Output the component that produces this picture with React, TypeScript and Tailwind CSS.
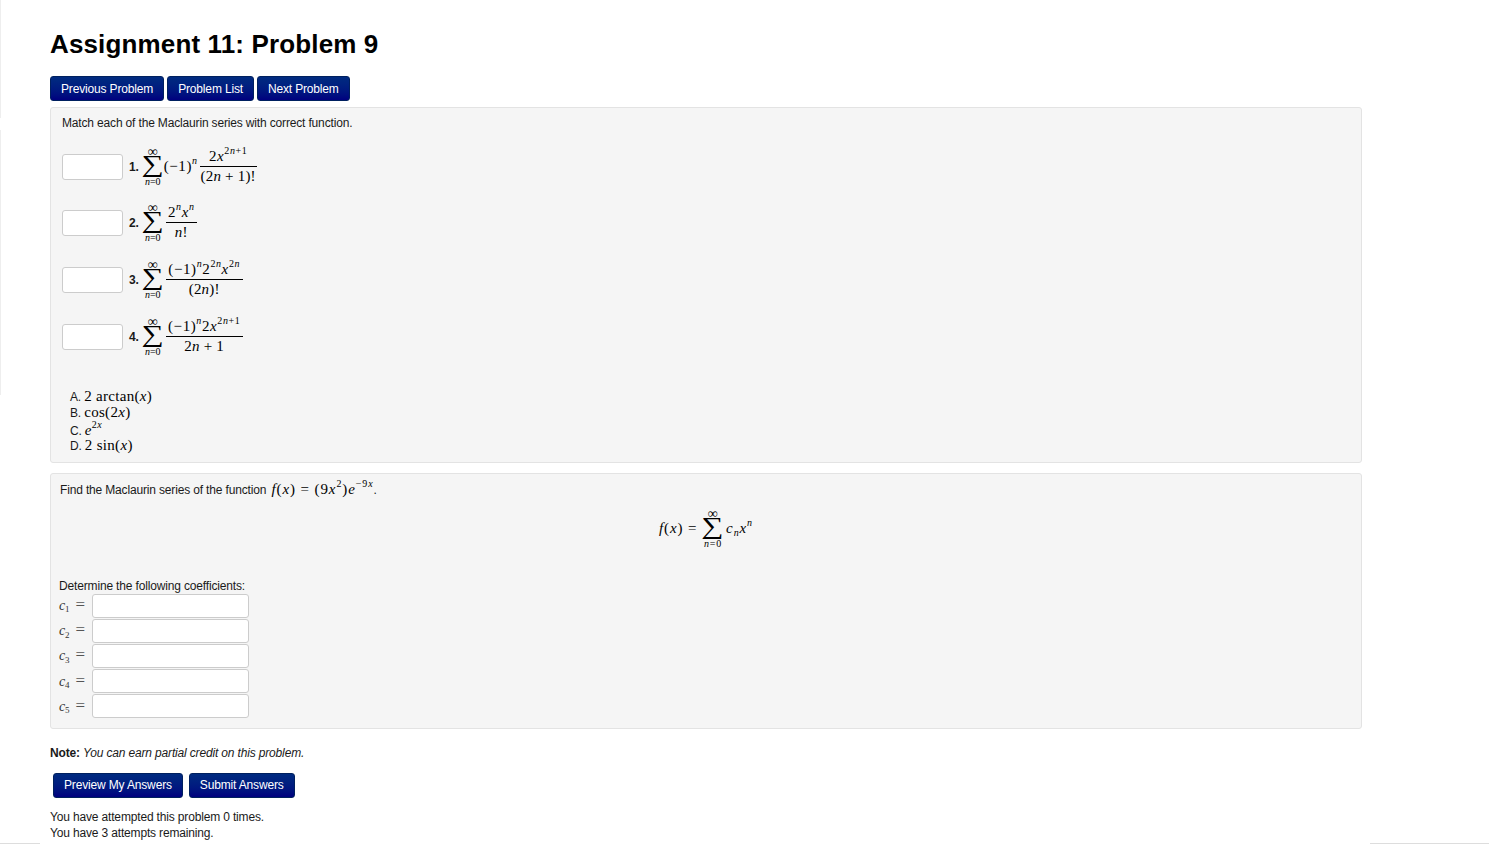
import { ReactNode } from 'react';

const sans = "font-['Liberation_Sans',Arial,sans-serif]";
const serif = "font-['Liberation_Serif','Times_New_Roman',serif]";

function Btn({ children, low }: { children: ReactNode; low?: boolean }) {
  return (
    <button className={`${low ? 'pt-px' : ''} h-[25px] rounded-[3px] border border-[#00205f] bg-gradient-to-b from-[#002b80] to-[#00007f] px-[10px] text-[12px] leading-[23px] tracking-[-0.16px] text-white`}>
      {children}
    </button>
  );
}

function I({ children }: { children: ReactNode }) {
  return <i className="italic">{children}</i>;
}

function Sup({ children }: { children: ReactNode }) {
  return <sup className="relative top-[-1px] align-super text-[10px] leading-none">{children}</sup>;
}

function Sum() {
  return (
    <span className={`${serif} inline-flex w-[22px] shrink-0 flex-col items-center text-black`}>
      <span className="h-[10px] text-[14px] leading-[9px]">∞</span>
      <span className="h-[20px] scale-x-[1.3] text-[24px] leading-[15px]">∑</span>
      <span className="h-[9px] whitespace-nowrap text-[10px] leading-[9px]"><I>n</I>=0</span>
    </span>
  );
}

function Frac({ top, bottom, width }: { top: ReactNode; bottom: ReactNode; width: string }) {
  return (
    <span className={`${serif} ${width} inline-flex shrink-0 flex-col items-center text-[15px] tracking-[0.2px] text-black`}>
      <span className="h-[20px] self-stretch whitespace-nowrap border-b border-black text-center leading-[18px] tracking-[0.6px]">{top}</span>
      <span className="h-[19px] whitespace-nowrap leading-[18px]">{bottom}</span>
    </span>
  );
}

function MatchRow({ label, height, children }: { label: string; height: string; children: ReactNode }) {
  return (
    <div className={`${height} flex items-center`}>
      <input className="h-[26px] w-[61px] rounded-[3px] border border-[#ccc] bg-white" />
      <b className="ml-[6px] mr-[3px] text-[12px] font-bold">{label}</b>
      <Sum />
      {children}
    </div>
  );
}

function Coef({ n }: { n: number }) {
  return (
    <div className="flex h-[25.2px] items-center">
      <span className={`${serif} w-[33px] shrink-0 text-[14px] text-[#333]`}>
        <I>c</I><sub className="text-[9px]">{n}</sub>
        <span className="ml-[6px] text-[17px] leading-none text-[#555]">=</span>
      </span>
      <input className="h-[24px] w-[157px] rounded-[3px] border border-[#ccc] bg-white" />
    </div>
  );
}

export default function App() {
  return (
    <div className={`${sans} relative h-[844px] w-full overflow-hidden bg-white text-[12px] tracking-[-0.16px] text-[#1a1a1a]`}>
      <div className="absolute left-0 top-0 h-[118px] w-px bg-[#eeeeee]" />
      <div className="absolute left-0 top-[130px] h-[265px] w-px bg-[#eeeeee]" />
      <div className="absolute bottom-0 left-0 h-px w-[40px] bg-[#dddddd]" />
      <div className="absolute bottom-0 right-0 h-px w-[119px] bg-[#dddddd]" />

      <div className="ml-[50px] flex w-[1312px] flex-col">
        <h1 className="mt-[28px] h-[32px] text-[26px] font-bold leading-[32px] tracking-[0.14px] text-black">
          Assignment 11: Problem 9
        </h1>
        <div className="mt-[16px] flex gap-[3px]">
          <Btn low>Previous Problem</Btn>
          <Btn low>Problem List</Btn>
          <Btn low>Next Problem</Btn>
        </div>

        <section className="mt-[6px] h-[356px] rounded-[3px] border border-[#e3e3e3] bg-[#f5f5f5] pl-[11px] pt-[7px]">
          <p className="h-[16px] leading-[16px]">Match each of the Maclaurin series with correct function.</p>
          <div className="mt-[8px] flex flex-col">
            <MatchRow label="1." height="h-[55px]">
              <span className={`${serif} text-[15px] tracking-[0.6px] text-black`}>(−1)<Sup><I>n</I></Sup></span>
              <Frac
                width="w-[57px] ml-[2px]"
                top={<>2<I>x</I><Sup>2<I>n</I>+1</Sup></>}
                bottom={<>(2<I>n</I> + 1)!</>}
              />
            </MatchRow>
            <MatchRow label="2." height="h-[57px]">
              <Frac
                width="w-[31px] ml-[2px]"
                top={<>2<Sup><I>n</I></Sup><I>x</I><Sup><I>n</I></Sup></>}
                bottom={<><I>n</I>!</>}
              />
            </MatchRow>
            <MatchRow label="3." height="h-[57px]">
              <Frac
                width="w-[77px] ml-[2px]"
                top={<>(−1)<Sup><I>n</I></Sup>2<Sup>2<I>n</I></Sup><I>x</I><Sup>2<I>n</I></Sup></>}
                bottom={<>(2<I>n</I>)!</>}
              />
            </MatchRow>
            <MatchRow label="4." height="h-[57px]">
              <Frac
                width="w-[77px] ml-[2px]"
                top={<>(−1)<Sup><I>n</I></Sup>2<I>x</I><Sup>2<I>n</I>+1</Sup></>}
                bottom={<>2<I>n</I> + 1</>}
              />
            </MatchRow>
          </div>
          <div className="ml-[8px] mt-[23px] flex flex-col">
            <div className="h-[16.4px] leading-[16px]">A. <span className={`${serif} text-[15px] tracking-[0.3px] text-black`}>2 arctan(<I>x</I>)</span></div>
            <div className="h-[16.4px] leading-[16px]">B. <span className={`${serif} text-[15px] tracking-[0.3px] text-black`}>cos(2<I>x</I>)</span></div>
            <div className="h-[16.4px] leading-[16px]">C. <span className={`${serif} text-[15px] tracking-[0.3px] text-black`}><I>e</I><Sup>2<I>x</I></Sup></span></div>
            <div className="h-[16.4px] leading-[16px]">D. <span className={`${serif} text-[15px] tracking-[0.3px] text-black`}>2 sin(<I>x</I>)</span></div>
          </div>
        </section>

        <section className="mt-[10px] h-[256px] rounded-[3px] border border-[#e3e3e3] bg-[#f5f5f5] pl-[8px] pt-[6px]">
          <p className="ml-px h-[18px] leading-[18px]">
            Find the Maclaurin series of the function{' '}
            <span className={`${serif} ml-[2px] text-[15px] tracking-[0.9px] text-black`}>
              <I>f</I>(<I>x</I>) = (9<I>x</I><Sup>2</Sup>)<I>e</I><Sup>−9<I>x</I></Sup>
            </span>
            .
          </p>
          <div className="flex justify-center pr-[8px] pt-[11px]">
            <div className={`${serif} flex items-center text-[15px] tracking-[0.9px] text-black`}>
              <span><I>f</I>(<I>x</I>) =&nbsp;</span>
              <Sum />
              <span className="ml-[2px]"><I>c</I><sub className="text-[10px]"><I>n</I></sub><I>x</I><Sup><I>n</I></Sup></span>
            </div>
          </div>
          <p className="mt-[30px] h-[15px] leading-[16px]">Determine the following coefficients:</p>
          <div className="flex flex-col">
            {[1, 2, 3, 4, 5].map((n) => (
              <Coef key={n} n={n} />
            ))}
          </div>
        </section>

        <p className="mt-[16px] h-[16px] leading-[16px]">
          <b className="font-bold">Note:</b> <em className="italic">You can earn partial credit on this problem.</em>
        </p>
        <div className="ml-[3px] mt-[12px] flex gap-[6px]">
          <Btn>Preview My Answers</Btn>
          <Btn>Submit Answers</Btn>
        </div>
        <p className="mt-[11px] h-[16px] leading-[16px]">You have attempted this problem 0 times.</p>
        <p className="h-[16px] leading-[16px]">You have 3 attempts remaining.</p>
      </div>
    </div>
  );
}
